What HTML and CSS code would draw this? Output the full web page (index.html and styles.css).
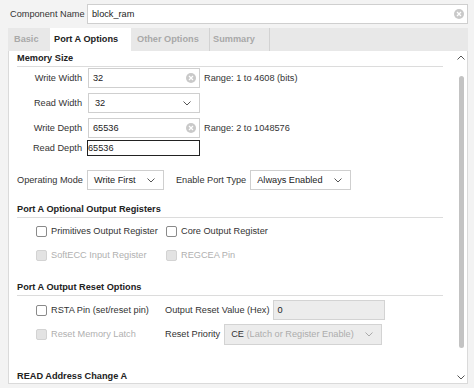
FILE: index.html
```html
<!DOCTYPE html>
<html lang="en">
<head>
  <meta charset="UTF-8" />
  <title>Block Memory Generator</title>
  <link rel="stylesheet" href="styles.css">
</head>
<body>

  <div class="top">
    <span class="top-label">Component Name</span>
    <div class="field name-field">
      <span>block_ram</span>
      <svg class="clear" width="10" height="10" viewBox="0 0 10 10"><circle cx="5" cy="5" r="5" fill="#c9c9c9"/><path d="M3 3 L7 7 M7 3 L3 7" stroke="#fff" stroke-width="1.3"/></svg>
    </div>
  </div>

  <div class="tabs">
    <div class="tab tab-basic">Basic</div>
    <div class="tab tab-porta active">Port A Options</div>
    <div class="tab tab-other">Other Options</div>
    <div class="tab tab-summary">Summary</div>
  </div>

  <div class="panel">
    <div class="content">

      <div class="section-title">Memory Size</div>

      <div class="mem-row first">
        <span class="mem-label">Write Width</span>
        <div class="field mem-field">
          <span>32</span>
          <svg class="clear" width="10" height="10" viewBox="0 0 10 10"><circle cx="5" cy="5" r="5" fill="#c9c9c9"/><path d="M3 3 L7 7 M7 3 L3 7" stroke="#fff" stroke-width="1.3"/></svg>
        </div>
        <span class="range">Range: 1 to 4608 (bits)</span>
      </div>

      <div class="mem-row">
        <span class="mem-label">Read Width</span>
        <div class="field select mem-field">
          <span>32</span>
          <svg class="chev" width="8" height="5" viewBox="0 0 8 5"><polyline points="0.5,0.5 4,4 7.5,0.5" fill="none" stroke="#555" stroke-width="1"/></svg>
        </div>
      </div>

      <div class="mem-row">
        <span class="mem-label">Write Depth</span>
        <div class="field mem-field">
          <span>65536</span>
          <svg class="clear" width="10" height="10" viewBox="0 0 10 10"><circle cx="5" cy="5" r="5" fill="#c9c9c9"/><path d="M3 3 L7 7 M7 3 L3 7" stroke="#fff" stroke-width="1.3"/></svg>
        </div>
        <span class="range">Range: 2 to 1048576</span>
      </div>

      <div class="mem-row last">
        <span class="mem-label">Read Depth</span>
        <div class="field readonly">
          <span>65536</span>
        </div>
      </div>

      <div class="mode-row">
        <span>Operating Mode</span>
        <div class="field select mode-select">
          <span>Write First</span>
          <svg class="chev" width="8" height="5" viewBox="0 0 8 5"><polyline points="0.5,0.5 4,4 7.5,0.5" fill="none" stroke="#555" stroke-width="1"/></svg>
        </div>
        <span class="second-label">Enable Port Type</span>
        <div class="field select enable-select">
          <span>Always Enabled</span>
          <svg class="chev" width="8" height="5" viewBox="0 0 8 5"><polyline points="0.5,0.5 4,4 7.5,0.5" fill="none" stroke="#555" stroke-width="1"/></svg>
        </div>
      </div>

      <div class="section-title gap-title">Port A Optional Output Registers</div>

      <div class="check-grid">
        <label class="check"><span class="box"></span>Primitives Output Register</label>
        <label class="check"><span class="box"></span>Core Output Register</label>
        <label class="check disabled"><span class="box"></span>SoftECC Input Register</label>
        <label class="check disabled"><span class="box"></span>REGCEA Pin</label>
      </div>

      <div class="section-title gap-title2">Port A Output Reset Options</div>

      <div class="check-grid reset-grid">
        <label class="check"><span class="box"></span>RSTA Pin (set/reset pin)</label>
        <div class="pair">
          <span>Output Reset Value (Hex)</span>
          <div class="field grey-field reset-value"><span>0</span></div>
        </div>
        <label class="check disabled"><span class="box"></span>Reset Memory Latch</label>
        <div class="pair">
          <span>Reset Priority</span>
          <div class="field select grey-field priority">
            <span><span class="strong">CE</span> <span class="muted">(Latch or Register Enable)</span></span>
            <svg class="chev" width="8" height="5" viewBox="0 0 8 5"><polyline points="0.5,0.5 4,4 7.5,0.5" fill="none" stroke="#aaa" stroke-width="1"/></svg>
          </div>
        </div>
      </div>

      <div class="section-title last-title">READ Address Change A</div>

    </div>

    <div class="scrollbar">
      <div class="arrow">
        <svg width="8" height="5" viewBox="0 0 8 5"><polyline points="0.5,4.5 4,1 7.5,4.5" fill="none" stroke="#555" stroke-width="1"/></svg>
      </div>
      <div class="track"><div class="thumb"></div></div>
      <div class="arrow">
        <svg width="8" height="5" viewBox="0 0 8 5"><polyline points="0.5,0.5 4,4 7.5,0.5" fill="none" stroke="#555" stroke-width="1"/></svg>
      </div>
    </div>
  </div>

</body>
</html>
```

FILE: styles.css
```css
body {
  margin: 0;
  width: 474px;
  height: 388px;
  overflow: hidden;
  background: #f3f3f3;
  font-family: "Liberation Sans", Arial, sans-serif;
  font-size: 9.2px;
  color: #333;
}

/* верхняя строка с именем компонента */
.top {
  display: flex;
  align-items: center;
  padding: 4px 6px 0 10px;
  gap: 5px;
}

.top-label {
  width: 72px;
  white-space: nowrap;
}

.field {
  box-sizing: border-box;
  height: 20px;
  border: 1px solid #cfcfcf;
  background: #fff;
  display: flex;
  align-items: center;
  justify-content: space-between;
  padding: 0 3px 0 4px;
  color: #222;
}

.name-field {
  flex: 1;
}

.clear {
  display: block;
}

/* вкладки */
.tabs {
  display: flex;
  height: 23px;
  margin: 4px 6px 0 8px;
  background: #e8e8e8;
}

.tab {
  box-sizing: border-box;
  line-height: 23px;
  padding-left: 5px;
  font-weight: bold;
  color: #a9a9a9;
}

.tab-basic { width: 42px; padding-left: 6px; }
.tab-porta { width: 81px; padding-left: 4px; }
.tab-other { width: 79px; padding-left: 6px; border-right: 1px solid #d2d2d2; }
.tab-summary { width: 60px; padding-left: 3px; border-right: 1px solid #d2d2d2; }

.tab.active {
  background: #fff;
  color: #222;
}

/* основная панель */
.panel {
  display: flex;
  height: 332px;
  margin: 0 6px 0 8px;
  background: #fff;
  border: 1px solid #dadada;
  border-top: none;
}

.content {
  flex: 1;
  padding: 0 12px 0 8px;
  overflow: hidden;
}

.section-title {
  font-weight: bold;
  color: #222;
  line-height: 12px;
  padding: 1px 0 2px;
  border-bottom: 1px solid #dcdcdc;
}

.gap-title { margin-top: 12px; }
.gap-title2 { margin-top: 13px; }
.last-title { margin-top: 23px; }

.mem-row {
  display: flex;
  align-items: center;
  margin-top: 5px;
}

.mem-row.first { margin-top: 1px; }
.mem-row.last { margin-top: 2px; }

.mem-label {
  width: 65px;
  text-align: right;
  margin-right: 6px;
  white-space: nowrap;
}

.mem-field {
  width: 112px;
}

.select {
  padding: 0 8px 0 6px;
}

.range {
  margin-left: 4px;
}

.readonly {
  width: 113px;
  height: 16px;
  margin-left: -1px;
  border: 1px solid #222;
  padding-left: 0;
}

.mode-row {
  display: flex;
  align-items: center;
  margin-top: 14px;
  white-space: nowrap;
}

.mode-select {
  width: 77px;
  margin-left: 4px;
}

.second-label {
  margin-left: 12px;
}

.enable-select {
  width: 101px;
  margin-left: 4px;
}

/* чекбоксы */
.check-grid {
  display: grid;
  grid-template-columns: 130px auto;
  grid-auto-rows: 24px;
  padding-left: 19px;
  margin-top: 1px;
}

.reset-grid {
  grid-template-columns: 129px auto;
  margin-top: 2px;
}

.check {
  display: flex;
  align-items: center;
  white-space: nowrap;
}

.box {
  box-sizing: border-box;
  width: 11px;
  height: 11px;
  border: 1px solid #8a8a8a;
  border-radius: 2px;
  background: #fff;
  margin-right: 4px;
}

.check.disabled {
  color: #b0b0b0;
}

.check.disabled .box {
  background: #e3e3e3;
  border-color: #d3d3d3;
}

.pair {
  display: flex;
  align-items: center;
  gap: 3px;
  white-space: nowrap;
}

.grey-field {
  background: #ececec;
  border-color: #d3d3d3;
}

.reset-value {
  width: 112px;
}

.priority {
  width: 158px;
  height: 21px;
  margin-left: 1px;
}

.strong { color: #333; }
.muted { color: #acacac; }

/* полоса прокрутки */
.scrollbar {
  width: 12px;
  display: flex;
  flex-direction: column;
  align-items: center;
}

.arrow {
  height: 12px;
  display: flex;
  align-items: center;
}

.track {
  flex: 1;
}

.thumb {
  width: 5px;
  height: 272px;
  margin-top: 13px;
  border-radius: 3px;
  background: #c3c3c3;
}
```
